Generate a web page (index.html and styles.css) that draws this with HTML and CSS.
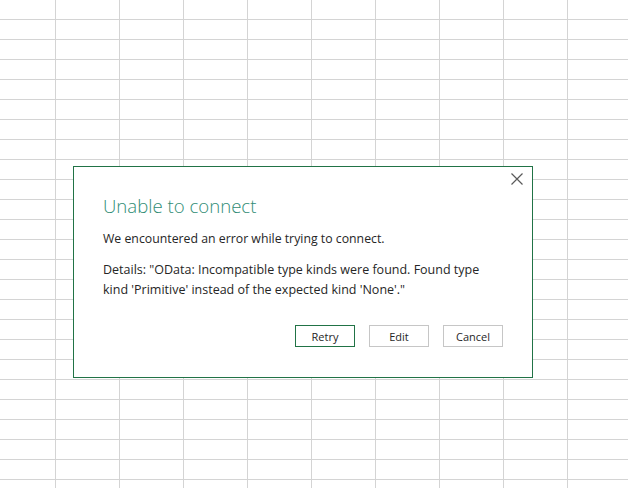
FILE: index.html
```html
<!DOCTYPE html>
<html>
<head>
<meta charset="utf-8">
<link rel="stylesheet" href="styles.css">
</head>
<body>
<div class="sheet">
  <div class="dialog">
    <button class="close" aria-label="Close">
      <svg width="12" height="12" viewBox="0 0 12 12"><path d="M0.5 0.5 L11.5 11.5 M11.5 0.5 L0.5 11.5" stroke="#5a5a5a" stroke-width="1.2" fill="none"/></svg>
    </button>
    <h1 class="title">Unable to connect</h1>
    <p class="msg">We encountered an error while trying to connect.</p>
    <p class="details">Details: "OData: Incompatible type kinds were found. Found type kind 'Primitive' instead of the expected kind 'None'."</p>
    <div class="actions">
      <button class="btn primary">Retry</button>
      <button class="btn">Edit</button>
      <button class="btn">Cancel</button>
    </div>
  </div>
</div>
</body>
</html>
```
FILE: styles.css
```css
html, body {
  margin: 0;
  padding: 0;
}
body {
  width: 628px;
  height: 488px;
  overflow: hidden;
  background: #fff;
  font-family: "Open Sans", "Noto Sans", sans-serif;
}
.sheet {
  position: relative;
  width: 628px;
  height: 488px;
  background-color: #fff;
  background-image:
    linear-gradient(to right, #d4d4d4 0, #d4d4d4 1px, transparent 1px),
    linear-gradient(to bottom, #d4d4d4 0, #d4d4d4 1px, transparent 1px);
  background-size: 64px 20px, 64px 20px;
  background-position: 55px 0, 0 19px;
}
.dialog {
  position: absolute;
  left: 73px;
  top: 166px;
  width: 458px;
  height: 210px;
  border: 1px solid #217346;
  background: #fff;
  box-sizing: content-box;
  padding: 0;
  display: flex;
  flex-direction: column;
}
.close {
  position: absolute;
  right: 9px;
  top: 6px;
  width: 12px;
  height: 12px;
  padding: 0;
  border: 0;
  background: transparent;
  display: flex;
}
.title {
  margin: 26px 0 0 29px;
  font-size: 18.6px;
  font-weight: 300;
  line-height: 26px;
  color: #2f8c74;
}
.msg {
  margin: 11px 0 0 29px;
  font-size: 12.3px;
  line-height: 18px;
  color: #262626;
}
.details {
  margin: 12px 0 0 29px;
  width: 392px;
  font-size: 12.5px;
  line-height: 20px;
  color: #262626;
}
.actions {
  margin-top: auto;
  padding: 0 29px 30px 0;
  display: flex;
  justify-content: flex-end;
  gap: 14px;
}
.btn {
  width: 60px;
  height: 22px;
  box-sizing: border-box;
  border: 1px solid #c6c6c6;
  background: #fff;
  font-family: "Open Sans", "Noto Sans", sans-serif;
  font-size: 11px;
  color: #262626;
  padding: 0;
}
.btn.primary {
  border-color: #217346;
}
```
